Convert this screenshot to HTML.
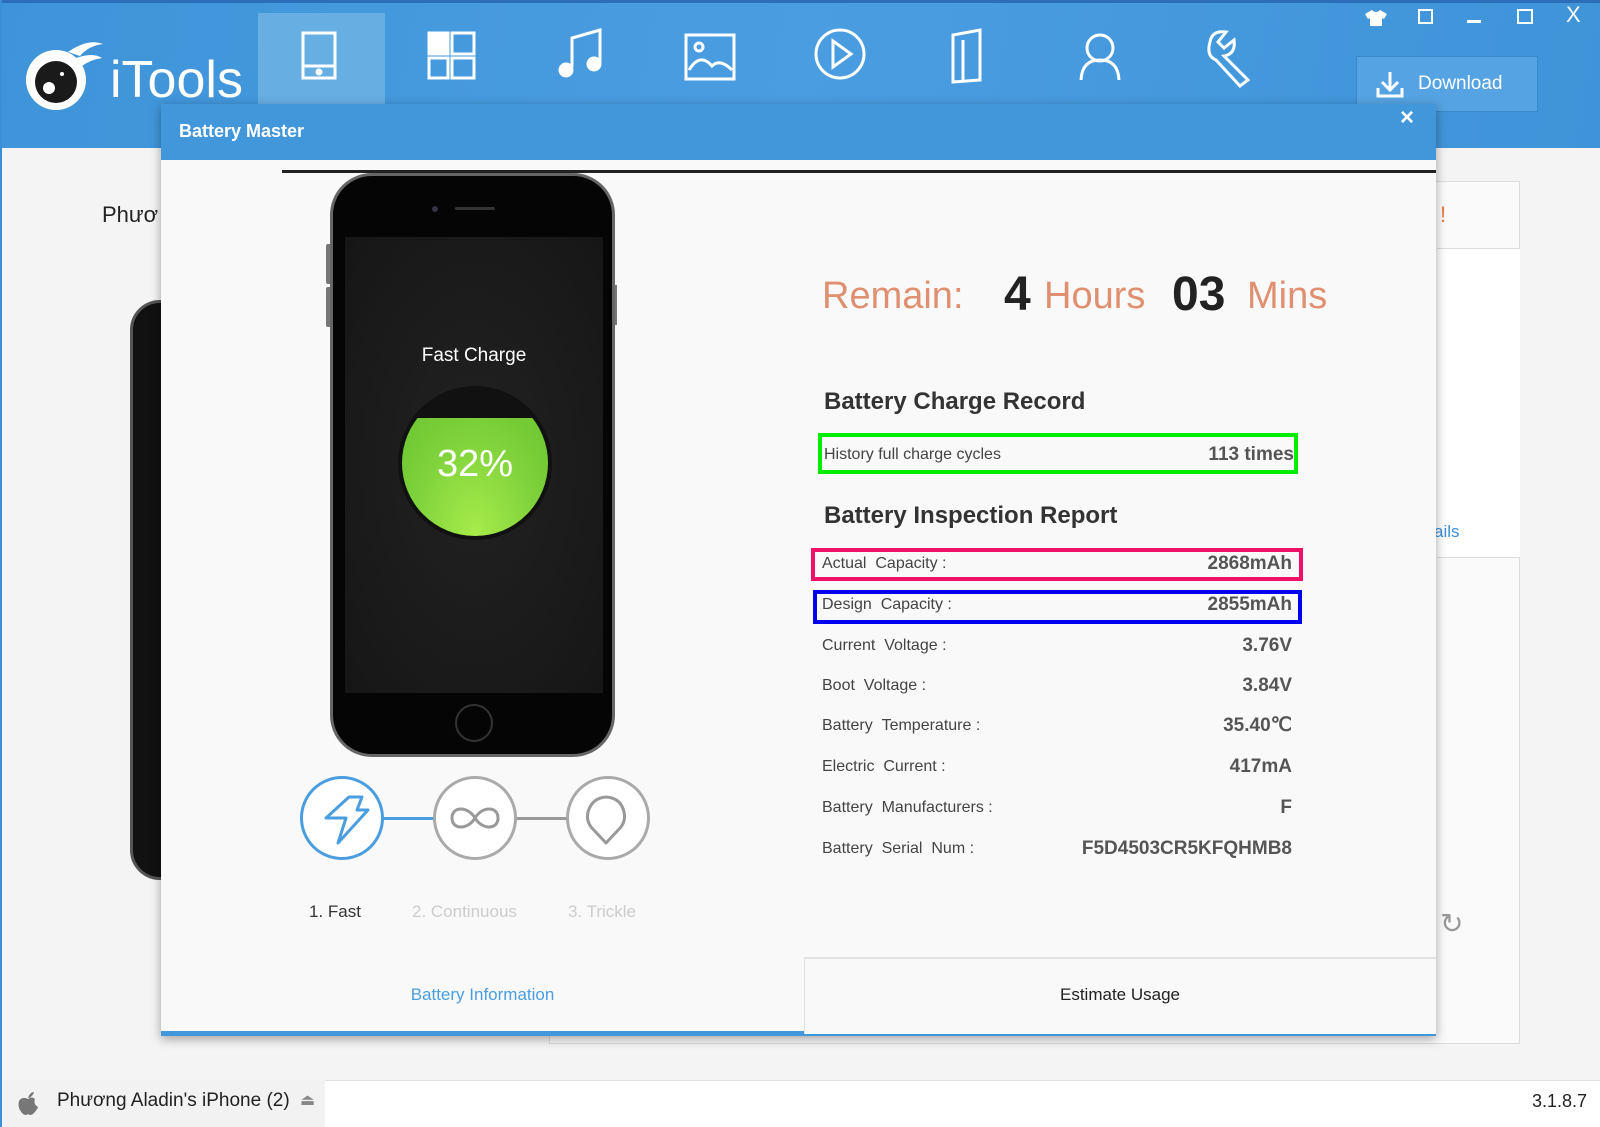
<!DOCTYPE html>
<html><head><meta charset="utf-8"><style>
*{margin:0;padding:0;box-sizing:border-box}
body{width:1600px;height:1127px;overflow:hidden;background:#f4f4f4;font-family:"Liberation Sans",sans-serif;position:relative}
.abs{position:absolute}
.top{left:0;top:0;width:1600px;height:148px;background:linear-gradient(100deg,#3f94d9 0%,#4a9de0 50%,#3f93d8 100%);border-top:3px solid #2a6fb8}
.row{position:absolute;left:822px;width:470px;height:30px;font-size:16px;color:#444;line-height:30px}
.row b{position:absolute;right:0;top:0;font-size:19px;color:#555}
</style></head><body>
<div class="abs top"></div>
<svg class="abs" style="left:18px;top:38px" width="90" height="80" viewBox="0 0 90 80">
<ellipse cx="38" cy="42" rx="30" ry="30" fill="#fff"/><circle cx="38" cy="44" r="21" fill="#1a1a1a"/><circle cx="31" cy="50" r="6" fill="#fff"/><circle cx="44" cy="36" r="2" fill="#fff"/>
<path d="M50 14 Q70 0 85 6 Q70 8 62 18 Z M58 20 Q75 14 84 20 Q72 22 64 28Z" fill="#fff"/></svg>
<div class="abs" style="left:110px;top:50px;font-size:52px;color:#fff;line-height:60px">iTools</div>
<div class="abs" style="left:258px;top:13px;width:127px;height:92px;background:#67aee3"></div>
<svg class="abs" style="left:0;top:0" width="1300" height="110" fill="none" stroke="#fff" stroke-width="3">
<rect x="303" y="33" width="32" height="45"/><line x1="303" y1="66" x2="335" y2="66"/><circle cx="319" cy="72" r="2" fill="#fff"/>
<rect x="429" y="33" width="19" height="21" fill="#fff"/><rect x="452" y="33" width="22" height="21"/><rect x="429" y="58" width="19" height="20"/><rect x="452" y="58" width="22" height="20"/>
<path d="M572 67 V38 L600 30 V62"/><circle cx="566" cy="70" r="6" fill="#fff"/><circle cx="594" cy="64" r="6" fill="#fff"/>
<rect x="686" y="35" width="48" height="44"/><circle cx="699" cy="47" r="4"/><path d="M689 70 Q700 52 712 66 Q720 58 732 70"/>
<circle cx="840" cy="54" r="24"/><path d="M833 41 L851 54 L833 67 Z"/>
<path d="M953 35 L980 30 V80 L953 82 Z M963 40 V80"/>
<circle cx="1100" cy="48" r="13"/><path d="M1081 80 Q1082 60 1100 60 Q1118 60 1119 80"/>
<path d="M1210 42 Q1212 30 1226 32 L1218 42 L1224 48 L1234 40 Q1236 54 1224 56 L1248 80 L1240 86 L1216 60 Q1206 56 1210 42Z"/>
</svg>
<svg class="abs" style="left:1364px;top:9px" width="24" height="18"><path d="M8 1 L1 5 L4 10 L6 9 V17 H18 V9 L20 10 L23 5 L16 1 Q12 5 8 1Z" fill="#fff"/></svg>
<div class="abs" style="left:1418px;top:9px;width:15px;height:15px;border:2px solid #fff"></div>
<div class="abs" style="left:1467px;top:20px;width:14px;height:3px;background:#fff"></div>
<div class="abs" style="left:1517px;top:9px;width:16px;height:15px;border:2px solid #fff"></div>
<div class="abs" style="left:1566px;top:2px;color:#fff;font-size:22px">X</div>
<div class="abs" style="left:1356px;top:56px;width:182px;height:56px;background:#55a3e2;border:1px solid #3a87c9"></div>
<svg class="abs" style="left:1376px;top:70px" width="28" height="28" fill="none" stroke="#fff" stroke-width="3"><path d="M14 2 V20 M6 12 L14 20 L22 12 M2 18 V26 H26 V18"/></svg>
<div class="abs" style="left:1418px;top:73px;color:#fff;font-size:19px">Download</div>
<div class="abs" style="left:102px;top:202px;font-size:22px;color:#222">Phươ</div>
<div class="abs" style="left:130px;top:300px;width:40px;height:580px;background:#111;border-radius:30px 0 0 30px;border:3px solid #555"></div>
<div class="abs" style="left:549px;top:181px;width:971px;height:863px;background:#fafafa;border:1px solid #ddd"></div>
<div class="abs" style="left:1437px;top:248px;width:83px;height:310px;background:#fff;border-top:1px solid #ddd;border-bottom:1px solid #ddd"></div>
<div class="abs" style="left:1440px;top:202px;color:#f07a4a;font-size:22px">!</div>
<div class="abs" style="left:1434px;top:522px;color:#3b8fd8;font-size:17px">ails</div>
<div class="abs" style="left:1440px;top:907px;color:#999;font-size:28px">&#8635;</div>
<div class="abs" style="left:0;top:1080px;width:325px;height:47px;background:#f2f2f2"></div>
<div class="abs" style="left:325px;top:1080px;width:1275px;height:47px;background:#fff;border-top:1px solid #e2e2e2"></div>
<svg class="abs" style="left:16px;top:1090px" width="24" height="26"><path d="M12 8 Q14 2 18 2 Q17 6 13 8Z M12 9 Q6 6 3 11 Q1 18 7 24 Q10 26 12 24 Q14 26 17 24 Q21 20 22 17 Q17 14 19 9 Q16 6 12 9Z" fill="#777"/></svg>
<div class="abs" style="left:57px;top:1090px;font-size:19px;color:#222">Phương Aladin's iPhone (2)</div>
<div class="abs" style="left:300px;top:1090px;font-size:16px;color:#888">&#9167;</div>
<div class="abs" style="left:1532px;top:1091px;font-size:18px;color:#222">3.1.8.7</div>
<div class="abs" style="left:0;top:0;width:2px;height:1127px;background:#3a8fd6"></div>
<div class="abs" style="left:161px;top:104px;width:1275px;height:932px;background:#f9f9f9;box-shadow:0 3px 10px rgba(0,0,0,.35)"></div>
<div class="abs" style="left:161px;top:104px;width:1275px;height:56px;background:#4297db"></div>
<div class="abs" style="left:179px;top:121px;color:#fff;font-size:18px;font-weight:bold">Battery Master</div>
<div class="abs" style="left:1400px;top:104px;color:#fff;font-size:24px;font-weight:bold">×</div>
<div class="abs" style="left:282px;top:170px;width:1154px;height:3px;background:#222"></div>
<div class="abs" style="left:326px;top:244px;width:6px;height:40px;background:#777;border-radius:2px"></div>
<div class="abs" style="left:326px;top:287px;width:6px;height:40px;background:#777;border-radius:2px"></div>
<div class="abs" style="left:612px;top:285px;width:5px;height:40px;background:#777"></div>
<div class="abs" style="left:330px;top:173px;width:285px;height:584px;background:#050505;border-radius:42px;border:3px solid #666"></div>
<div class="abs" style="left:345px;top:237px;width:258px;height:456px;background:radial-gradient(ellipse at 50% 50%,#222,#161616)"></div>
<div class="abs" style="left:432px;top:206px;width:6px;height:6px;border-radius:50%;background:#334"></div>
<div class="abs" style="left:455px;top:207px;width:40px;height:3px;background:#333;border-radius:2px"></div>
<div class="abs" style="left:455px;top:704px;width:38px;height:38px;border-radius:50%;border:2px solid #333"></div>
<div class="abs" style="left:345px;top:345px;width:258px;text-align:center;color:#fff;font-size:19px">Fast Charge</div>
<div class="abs" style="left:398px;top:386px;width:154px;height:154px;border-radius:50%;background:#111"></div>
<div class="abs" style="left:402px;top:390px;width:146px;height:146px;border-radius:50%;overflow:hidden"><div style="position:absolute;left:0;top:28px;width:146px;height:118px;background:radial-gradient(ellipse at 50% 100%,#a7ec4a,#7fd23c 60%,#6cc52f)"></div></div>
<div class="abs" style="left:398px;top:443px;width:154px;text-align:center;color:#fff;font-size:38px">32%</div>
<div class="abs" style="left:382px;top:817px;width:52px;height:3px;background:#4a9ee0"></div>
<div class="abs" style="left:516px;top:817px;width:52px;height:3px;background:#999"></div>
<div class="abs" style="left:300px;top:776px;width:84px;height:84px;border-radius:50%;border:3px solid #4a9ee0;background:#fff"></div>
<div class="abs" style="left:433px;top:776px;width:84px;height:84px;border-radius:50%;border:3px solid #aaa;background:#fff"></div>
<div class="abs" style="left:566px;top:776px;width:84px;height:84px;border-radius:50%;border:3px solid #aaa;background:#fff"></div>
<svg class="abs" style="left:0;top:0" width="700" height="900" fill="none" stroke-width="3" stroke-linejoin="round">
<path d="M349 797 H362 L357 810 H368 L338 843 L346 818 H326 Z" stroke="#4a9ee0"/>
<path d="M475 818 C468 806 452 806 452 818 C452 830 468 830 475 818 C482 806 498 806 498 818 C498 830 482 830 475 818Z" stroke="#999"/>
<path d="M606 843 L591 827 Q586 820 588 812 Q592 798 606 797 Q621 798 624 812 Q626 820 621 827 Z" stroke="#999"/>
</svg>
<div class="abs" style="left:309px;top:902px;font-size:17px;color:#333">1. Fast</div>
<div class="abs" style="left:412px;top:902px;font-size:17px;color:#ccc">2. Continuous</div>
<div class="abs" style="left:568px;top:902px;font-size:17px;color:#ccc">3. Trickle</div>
<div class="abs" style="left:822px;top:275px;font-size:38px;color:#e09070">Remain:</div>
<div class="abs" style="left:1004px;top:267px;font-size:48px;font-weight:bold;color:#222">4</div>
<div class="abs" style="left:1044px;top:275px;font-size:38px;color:#e09070">Hours</div>
<div class="abs" style="left:1172px;top:267px;font-size:48px;font-weight:bold;color:#222">03</div>
<div class="abs" style="left:1247px;top:275px;font-size:38px;color:#e09070">Mins</div>
<div class="abs" style="left:824px;top:388px;font-size:24px;font-weight:bold;color:#333">Battery Charge Record</div>
<div class="abs" style="left:818px;top:433px;width:480px;height:41px;border:4px solid #00ee00"></div>
<div class="row" style="top:440px;width:470px;left:824px">History full charge cycles<b>113 times</b></div>
<div class="abs" style="left:824px;top:502px;font-size:24px;font-weight:bold;color:#333">Battery Inspection Report</div>
<div class="abs" style="left:811px;top:548px;width:492px;height:33px;border:4px solid #ee1166"></div>
<div class="abs" style="left:813px;top:590px;width:489px;height:34px;border:4px solid #0000ee"></div>
<div class="row" style="top:549px">Actual &nbsp;Capacity :<b>2868mAh</b></div>
<div class="row" style="top:590px">Design &nbsp;Capacity :<b>2855mAh</b></div>
<div class="row" style="top:631px">Current &nbsp;Voltage :<b>3.76V</b></div>
<div class="row" style="top:671px">Boot &nbsp;Voltage :<b>3.84V</b></div>
<div class="row" style="top:711px">Battery &nbsp;Temperature :<b>35.40℃</b></div>
<div class="row" style="top:752px">Electric &nbsp;Current :<b>417mA</b></div>
<div class="row" style="top:793px">Battery &nbsp;Manufacturers :<b>F</b></div>
<div class="row" style="top:834px">Battery &nbsp;Serial &nbsp;Num :<b>F5D4503CR5KFQHMB8</b></div>
<div class="abs" style="left:804px;top:957px;width:632px;height:79px;background:#f9f9f9;border-top:2px solid #e2e2e2;border-left:1px solid #e2e2e2"></div>
<div class="abs" style="left:161px;top:985px;width:643px;text-align:center;font-size:17px;color:#4a9ee0">Battery Information</div>
<div class="abs" style="left:804px;top:985px;width:632px;text-align:center;font-size:17px;color:#222">Estimate Usage</div>
<div class="abs" style="left:161px;top:1031px;width:643px;height:5px;background:#4297db"></div>
<div class="abs" style="left:804px;top:1034px;width:632px;height:2px;background:#4297db"></div>
</body></html>
